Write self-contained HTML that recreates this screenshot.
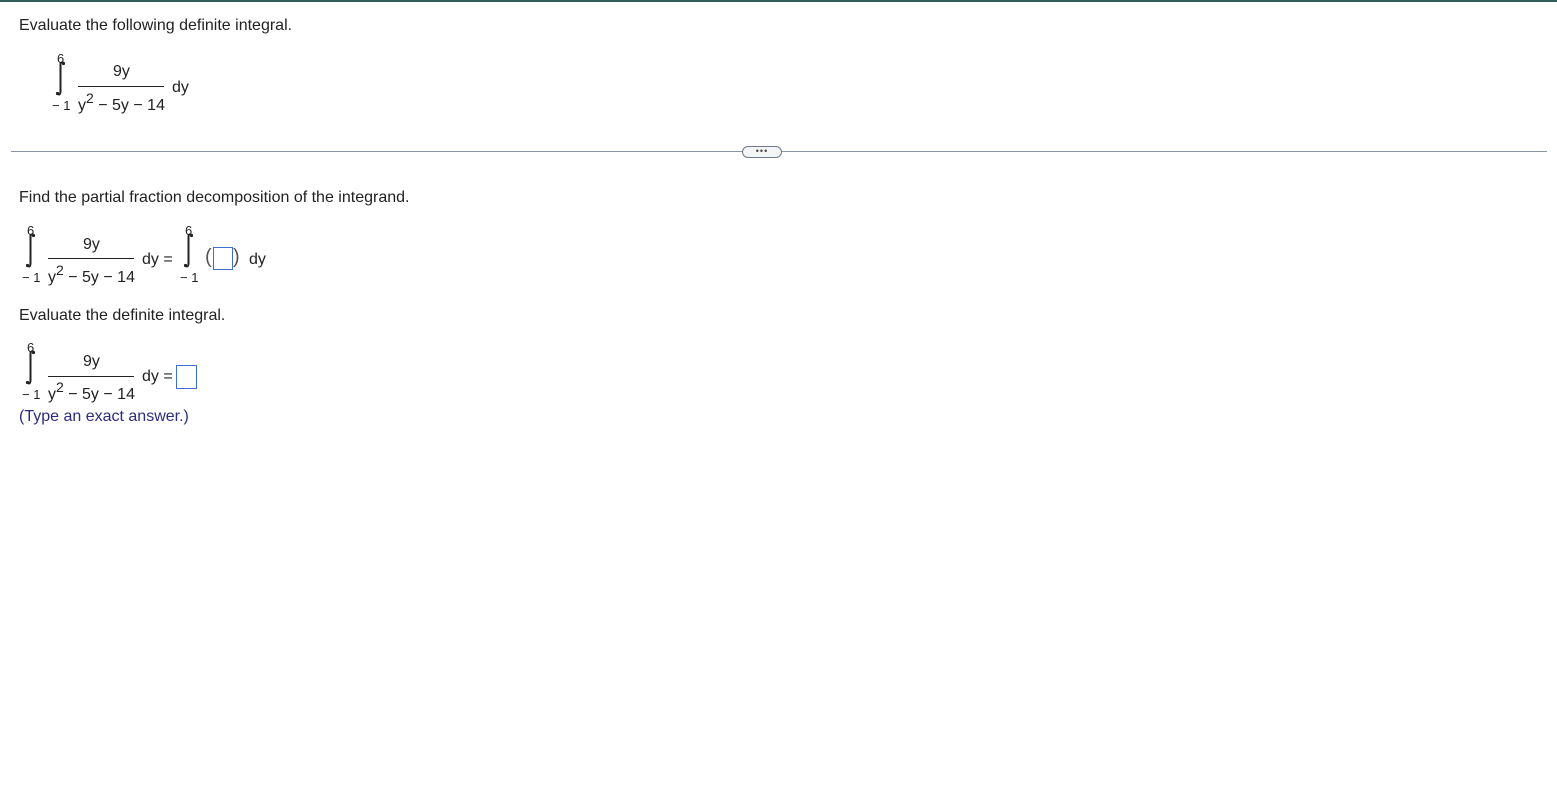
<!DOCTYPE html>
<html><head><style>
body{margin:0;width:1557px;height:801px;background:#fff;position:relative;overflow:hidden;font-family:"Liberation Sans",Arial,sans-serif;color:#222;}
.t{position:absolute;font-size:16px;line-height:18px;white-space:nowrap;}
.s{position:absolute;font-size:13px;line-height:13px;white-space:nowrap;}
.fl{position:absolute;height:1px;background:#222;}
.box{position:absolute;border:1px solid #3b6fd1;background:#fff;box-sizing:border-box;}
.sp{font-size:14px;position:relative;top:-7px;line-height:0;}
svg{position:absolute;}
</style></head><body>
<div style="position:absolute;left:0;top:0;width:1557px;height:2px;background:#2f5e5a"></div>
<div class="t" style="left:19px;top:17px">Evaluate the following definite integral.</div>

<div class="s" style="left:57px;top:52px">6</div>
<svg style="left:53px;top:60px" width="14" height="38"><path d="M10 3 Q8 1.5 7.5 4 L7.5 32 Q7 35.5 5 34" stroke="#222" stroke-width="2" fill="none"/><circle cx="10.5" cy="3.5" r="1.6" fill="#222"/><circle cx="4.5" cy="33.5" r="1.6" fill="#222"/></svg>
<div class="s" style="left:52px;top:99px">− 1</div>
<div class="t" style="left:113px;top:63px">9y</div>
<div class="fl" style="left:78px;top:86px;width:86px"></div>
<div class="t" style="left:78px;top:97px">y<span class="sp">2</span> − 5y − 14</div>
<div class="t" style="left:172px;top:79px">dy</div>

<div style="position:absolute;left:11px;top:151px;width:1536px;height:1px;background:#8a96a6"></div>
<div style="position:absolute;left:742px;top:146px;width:38px;height:10px;border:1px solid #6f7a88;border-radius:6px;background:#f4f5f7;text-align:center;font-size:9px;line-height:9px;color:#444;letter-spacing:1px">•••</div>

<div class="t" style="left:19px;top:189px">Find the partial fraction decomposition of the integrand.</div>

<div class="s" style="left:27px;top:224px">6</div>
<svg style="left:23px;top:232px" width="14" height="38"><path d="M10 3 Q8 1.5 7.5 4 L7.5 32 Q7 35.5 5 34" stroke="#222" stroke-width="2" fill="none"/><circle cx="10.5" cy="3.5" r="1.6" fill="#222"/><circle cx="4.5" cy="33.5" r="1.6" fill="#222"/></svg>
<div class="s" style="left:22px;top:271px">− 1</div>
<div class="t" style="left:83px;top:236px">9y</div>
<div class="fl" style="left:48px;top:258px;width:86px"></div>
<div class="t" style="left:48px;top:269px">y<span class="sp">2</span> − 5y − 14</div>
<div class="t" style="left:142px;top:251px">dy =</div>
<div class="s" style="left:185px;top:224px">6</div>
<svg style="left:181px;top:232px" width="14" height="38"><path d="M10 3 Q8 1.5 7.5 4 L7.5 32 Q7 35.5 5 34" stroke="#222" stroke-width="2" fill="none"/><circle cx="10.5" cy="3.5" r="1.6" fill="#222"/><circle cx="4.5" cy="33.5" r="1.6" fill="#222"/></svg>
<div class="s" style="left:180px;top:271px">− 1</div>
<div class="t" style="left:205px;top:248px;font-size:20px;color:#555">(</div>
<div class="box" style="left:213px;top:247px;width:20px;height:23px"></div>
<div class="t" style="left:233px;top:248px;font-size:20px;color:#555">)</div>
<div class="t" style="left:249px;top:251px">dy</div>

<div class="t" style="left:19px;top:307px">Evaluate the definite integral.</div>

<div class="s" style="left:27px;top:341px">6</div>
<svg style="left:23px;top:349px" width="14" height="38"><path d="M10 3 Q8 1.5 7.5 4 L7.5 32 Q7 35.5 5 34" stroke="#222" stroke-width="2" fill="none"/><circle cx="10.5" cy="3.5" r="1.6" fill="#222"/><circle cx="4.5" cy="33.5" r="1.6" fill="#222"/></svg>
<div class="s" style="left:22px;top:388px">− 1</div>
<div class="t" style="left:83px;top:353px">9y</div>
<div class="fl" style="left:48px;top:376px;width:86px"></div>
<div class="t" style="left:48px;top:386px">y<span class="sp">2</span> − 5y − 14</div>
<div class="t" style="left:142px;top:368px">dy =</div>
<div class="box" style="left:176px;top:365px;width:21px;height:24px"></div>
<div class="t" style="left:19px;top:408px;color:#2d2b7e">(Type an exact answer.)</div>
</body></html>
